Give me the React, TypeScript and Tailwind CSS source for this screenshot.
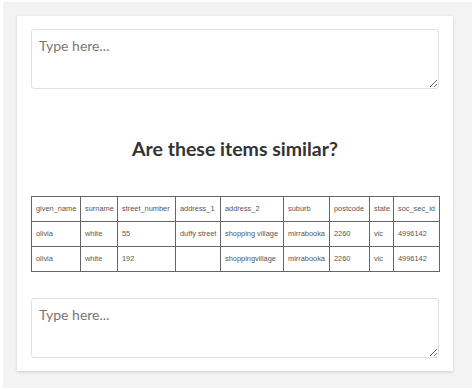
import React from "react";

const headers = ["given_name", "surname", "street_number", "address_1", "address_2", "suburb", "postcode", "state", "soc_sec_id"];
const widths = [49, 37, 58, 45, 63, 46, 40, 24, 46];
const rows = [
  ["olivia", "white", "55", "duffy street", "shopping village", "mirrabooka", "2260", "vic", "4996142"],
  ["olivia", "white", "192", "", "shoppingvillage", "mirrabooka", "2260", "vic", "4996142"],
];

export default function App() {
  return (
    <div className="w-[474px] h-[390px] bg-white pt-[2px] pl-[3px]" style={{ fontFamily: "Lato, sans-serif" }}>
      <div className="w-[469px] h-[386px] bg-[#f3f3f3] pt-[14px] pl-[14px]">
        <div className="w-[436px] h-[355px] bg-white shadow-[0_1px_3px_rgba(0,0,0,0.15)] pt-[13px] px-[14px] flex flex-col">
          <textarea
            placeholder="Type here..."
            className="w-[408px] h-[60px] shrink-0 border border-[#e0e0e0] rounded-[3px] px-[7px] py-[5px] text-[14px] text-[#555] placeholder:text-[#777] outline-none"
            style={{ fontFamily: "Lato, sans-serif" }}
          />
          <h1 className="mt-[48px] text-center text-[19.5px] font-bold text-[#333] leading-[24px]">Are these items similar?</h1>
          <table
            className="mt-[35px] border-collapse text-[7.4px] text-[#555]"
            style={{ fontFamily: "'Liberation Sans', Arial, sans-serif", width: 409, tableLayout: "fixed" }}
          >
            <colgroup>
              {widths.map((w, i) => (
                <col key={i} style={{ width: w }} />
              ))}
            </colgroup>
            <thead>
              <tr className="h-[25px]">
                {headers.map((h) => (
                  <th key={h} className="border border-[#666] font-normal text-left pl-[4px] pr-0 whitespace-nowrap overflow-hidden">
                    {h}
                  </th>
                ))}
              </tr>
            </thead>
            <tbody>
              {rows.map((r, i) => (
                <tr key={i} className="h-[25px]">
                  {r.map((c, j) => (
                    <td key={j} className="border border-[#666] pl-[4px] pr-0 whitespace-nowrap overflow-hidden">
                      {c}
                    </td>
                  ))}
                </tr>
              ))}
            </tbody>
          </table>
          <textarea
            placeholder="Type here..."
            className="mt-[26px] w-[408px] h-[60px] shrink-0 border border-[#e0e0e0] rounded-[3px] px-[7px] py-[5px] text-[14px] text-[#555] placeholder:text-[#777] outline-none"
            style={{ fontFamily: "Lato, sans-serif" }}
          />
        </div>
      </div>
    </div>
  );
}
